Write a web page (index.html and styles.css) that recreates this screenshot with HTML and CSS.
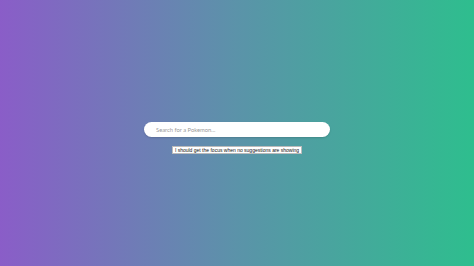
FILE: index.html
```html
<!DOCTYPE html>
<html>
<head>
<meta charset="utf-8">
<link rel="stylesheet" href="styles.css">
</head>
<body>
<main class="page">
  <div class="search">
    <input class="search-input" type="text" placeholder="Search for a Pokemon...">
    <div class="note">I should get the focus when no suggestions are showing</div>
  </div>
</main>
</body>
</html>
```
FILE: styles.css
```css
html, body {
  margin: 0;
  padding: 0;
  height: 100%;
}
body {
  background: linear-gradient(to right, #8a5dc8 0%, #5b93a9 50%, #2ebe8e 100%);
  font-family: "Lato", "Liberation Sans", sans-serif;
}
.page {
  height: 100%;
  display: flex;
  align-items: center;
  justify-content: center;
}
.search {
  display: flex;
  flex-direction: column;
  align-items: center;
  gap: 9px;
  margin-top: 9px;
}
.search-input {
  box-sizing: border-box;
  width: 186px;
  height: 15px;
  border: none;
  border-radius: 8px;
  background: #fff;
  padding: 0 10px 0 12px;
  font-family: "Lato", "Liberation Sans", sans-serif;
  font-size: 5.8px;
  color: #333;
  outline: none;
  box-shadow: 0 1px 2px rgba(0,0,0,0.15);
}
.search-input::placeholder {
  color: #9a9a9a;
}
.note {
  background: #fff;
  border: 1px solid #bbb;
  font-family: "Liberation Sans", Arial, sans-serif;
  font-size: 5px;
  line-height: 6px;
  padding: 0 2px;
  color: #111;
}
```
